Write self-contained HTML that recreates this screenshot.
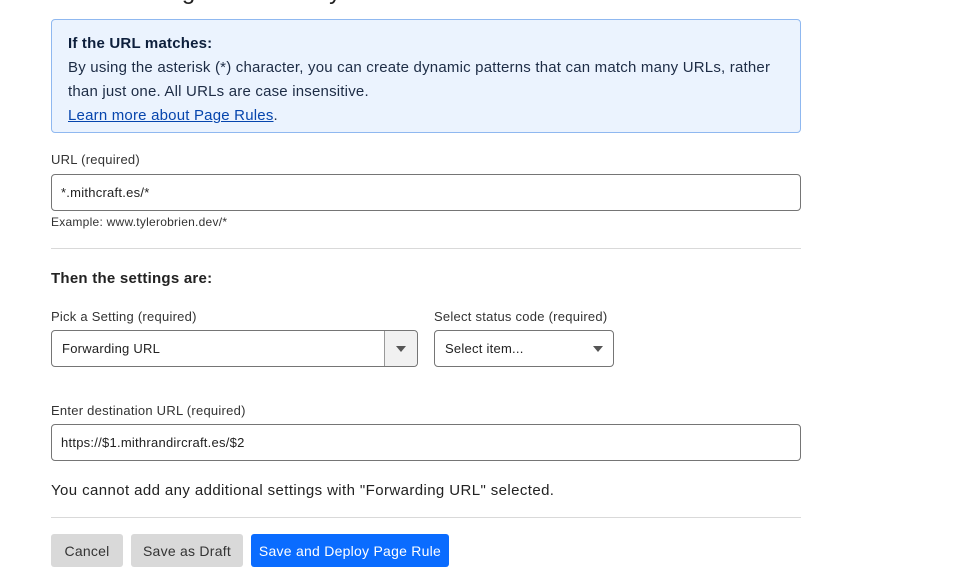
<!DOCTYPE html>
<html><head><meta charset="utf-8"><style>
*{box-sizing:border-box;margin:0;padding:0}
body{width:970px;height:574px;background:#fff;font-family:"Liberation Sans",sans-serif;color:#222;position:relative;overflow:hidden;letter-spacing:0.25px}
.a{position:absolute}
.info{left:51px;top:19px;width:750px;height:114px;background:#ebf3fe;border:1px solid #8fb8f0;border-radius:4px;padding:12px 10px 12px 16px;font-size:15px;line-height:24px;color:#1d2c45;letter-spacing:0.2px}
.info b{color:#0d1f3c}
.info a{color:#0645ad;text-decoration:underline}
.lbl{font-size:13px;color:#333}
.inp{border:1px solid #757575;border-radius:4px;background:#fff;font-size:13px;color:#222;padding:0 9px;display:flex;align-items:center}
.hr{left:51px;width:750px;height:1px;background:#d9d9d9}
.btn{top:534px;height:33px;border-radius:3px;font-size:14px;display:flex;align-items:center;justify-content:center}
.tri{width:0;height:0;border-left:5px solid transparent;border-right:5px solid transparent;border-top:6px solid #555}
</style></head><body>
<div class="a" style="left:51px;top:-22px;font-size:24px;color:#222">Create a Page Rule for mythcraft.es</div>
<div class="a info"><b>If the URL matches:</b><br>By using the asterisk (*) character, you can create dynamic patterns that can match many URLs, rather<br>than just one. All URLs are case insensitive.<br><a>Learn more about Page Rules</a>.</div>
<div class="a lbl" style="left:51px;top:152px">URL (required)</div>
<div class="a inp" style="left:51px;top:174px;width:750px;height:37px">*.mithcraft.es/*</div>
<div class="a" style="left:51px;top:215px;font-size:12px;color:#333">Example: www.tylerobrien.dev/*</div>
<div class="a hr" style="top:248px"></div>
<div class="a" style="left:51px;top:270px;font-size:15px;font-weight:bold;color:#222">Then the settings are:</div>
<div class="a lbl" style="left:51px;top:309px">Pick a Setting (required)</div>
<div class="a inp" style="left:51px;top:330px;width:367px;height:37px;padding:0">
<span style="padding-left:10px;flex:1">Forwarding URL</span>
<span style="width:33px;height:35px;border-left:1px solid #999;background:#f1f1f1;display:flex;align-items:center;justify-content:center;border-radius:0 4px 4px 0"><span class="tri"></span></span></div>
<div class="a lbl" style="left:434px;top:309px">Select status code (required)</div>
<div class="a inp" style="left:434px;top:330px;width:180px;height:37px;justify-content:space-between;padding:0 10px"><span>Select item...</span><span class="tri"></span></div>
<div class="a lbl" style="left:51px;top:403px">Enter destination URL (required)</div>
<div class="a inp" style="left:51px;top:424px;width:750px;height:37px">https://$1.mithrandircraft.es/$2</div>
<div class="a" style="left:51px;top:482px;font-size:15px;color:#222;letter-spacing:0.4px">You cannot add any additional settings with "Forwarding URL" selected.</div>
<div class="a hr" style="top:517px"></div>
<div class="a btn" style="left:51px;width:72px;background:#d9d9d9;color:#333">Cancel</div>
<div class="a btn" style="left:131px;width:112px;background:#d9d9d9;color:#333">Save as Draft</div>
<div class="a btn" style="left:251px;width:198px;background:#0a6cff;color:#fff">Save and Deploy Page Rule</div>
</body></html>
